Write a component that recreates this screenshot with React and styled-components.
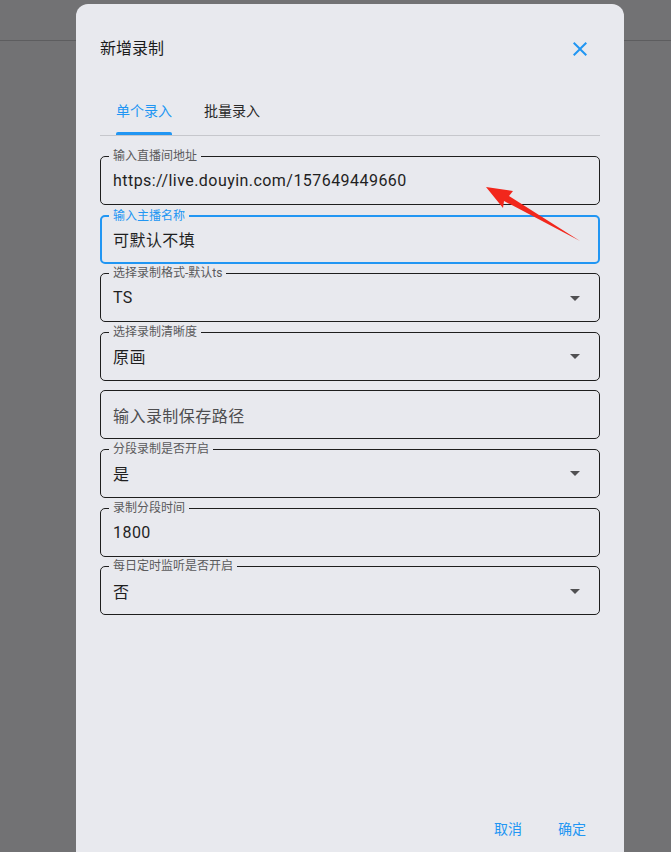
import styled, { createGlobalStyle } from "styled-components";

const GlobalStyle = createGlobalStyle`
  html, body {
    margin: 0;
    padding: 0;
    height: 100%;
    overflow: hidden;
  }
  body {
    font-family: Roboto, "Noto Sans CJK SC", sans-serif;
    background: #727274;
  }
`;

const Page = styled.div`
  position: relative;
  width: 100vw;
  height: 100vh;
  background: #727274;
`;

const AppBar = styled.div`
  height: 40px;
  border-bottom: 1px solid #5d5d5f;
`;

const Overlay = styled.div`
  position: absolute;
  inset: 0;
  display: flex;
  justify-content: flex-start;
  align-items: flex-start;
  padding: 4px 0 0 76px;
`;

const Dialog = styled.div`
  position: relative;
  width: 548px;
  height: 862px;
  background: #e8e9ee;
  border-radius: 12px;
  display: flex;
  flex-direction: column;
  box-sizing: border-box;
  padding-bottom: 20px;
`;

const Content = styled.div`
  flex: 1;
  padding: 33px 24px 0;
  display: flex;
  flex-direction: column;
`;

const TitleRow = styled.div`
  display: flex;
  align-items: center;
  justify-content: space-between;
  height: 24px;
`;

const Title = styled.h2`
  margin: 0;
  font-size: 16px;
  font-weight: 400;
  color: #1b1b1b;
  line-height: 24px;
`;

const CloseButton = styled.button`
  width: 40px;
  height: 40px;
  border: none;
  background: none;
  padding: 8px;
  display: flex;
  align-items: center;
  justify-content: center;
  color: #2196f3;
  cursor: pointer;
`;

const Tabs = styled.div`
  margin-top: 27px;
  display: flex;
  border-bottom: 1px solid #c6c7cc;
`;

const Tab = styled.button`
  position: relative;
  height: 47px;
  padding: 0 16px 4px;
  border: none;
  background: none;
  font-family: inherit;
  font-size: 14px;
  color: ${(p) => (p.$active ? "#2196f3" : "#2a2a2a")};
  cursor: pointer;

  &::after {
    content: "";
    display: ${(p) => (p.$active ? "block" : "none")};
    position: absolute;
    left: 16px;
    right: 16px;
    bottom: 0;
    height: 3px;
    border-radius: 2px 2px 0 0;
    background: #2196f3;
  }
`;

const Form = styled.div`
  margin-top: 20px;
  display: flex;
  flex-direction: column;
  gap: 9.6px;
`;

const Field = styled.div`
  position: relative;
  height: 49px;
  box-sizing: border-box;
  border: ${(p) => (p.$focused ? "2px solid #2196f3" : "1px solid #1e1e1e")};
  border-radius: 5px;
  display: flex;
  align-items: center;
  padding: 0 ${(p) => (p.$focused ? 11 : 12)}px;
`;

const Label = styled.span`
  position: absolute;
  top: -8px;
  left: ${(p) => (p.$focused ? 7 : 8)}px;
  padding: 0 4px;
  background: #e8e9ee;
  font-size: 12px;
  line-height: 14px;
  color: ${(p) => (p.$focused ? "#2196f3" : "#5a5a5c")};
`;

const Value = styled.span`
  flex: 1;
  font-size: 16px;
  color: ${(p) => (p.$placeholder ? "#4d4d4f" : "#1f1f1f")};
  letter-spacing: 0.45px;
`;

const Caret = styled.svg`
  width: 24px;
  height: 24px;
  fill: #505052;
`;

const Actions = styled.div`
  display: flex;
  justify-content: flex-end;
  padding-right: 20px;
`;

const TextButton = styled.button`
  width: 64px;
  height: 36px;
  border: none;
  background: none;
  font-family: inherit;
  font-size: 14px;
  color: #2196f3;
  cursor: pointer;
`;

const Annotation = styled.svg`
  position: absolute;
  left: 0;
  top: 0;
  pointer-events: none;
`;

const fields = [
  { label: "输入直播间地址", value: "https://live.douyin.com/157649449660" },
  { label: "输入主播名称", value: "可默认不填", focused: true },
  { label: "选择录制格式-默认ts", value: "TS", select: true },
  { label: "选择录制清晰度", value: "原画", select: true },
  { value: "输入录制保存路径", placeholder: true },
  { label: "分段录制是否开启", value: "是", select: true },
  { label: "录制分段时间", value: "1800" },
  { label: "每日定时监听是否开启", value: "否", select: true },
];

export default function App() {
  return (
    <>
      <GlobalStyle />
      <Page>
        <AppBar />
        <Overlay>
          <Dialog>
            <Content>
              <TitleRow>
                <Title>新增录制</Title>
                <CloseButton aria-label="close">
                  <svg width="24" height="24" viewBox="0 0 24 24" fill="currentColor">
                    <path d="M19 6.41 17.59 5 12 10.59 6.41 5 5 6.41 10.59 12 5 17.59 6.41 19 12 13.41 17.59 19 19 17.59 13.41 12z" />
                  </svg>
                </CloseButton>
              </TitleRow>
              <Tabs>
                <Tab $active>单个录入</Tab>
                <Tab>批量录入</Tab>
              </Tabs>
              <Form>
                {fields.map((f, i) => (
                  <Field key={i} $focused={f.focused}>
                    {f.label && <Label $focused={f.focused}>{f.label}</Label>}
                    <Value $placeholder={f.placeholder}>{f.value}</Value>
                    {f.select && (
                      <Caret viewBox="0 0 24 24">
                        <path d="M7 10l5 5 5-5z" />
                      </Caret>
                    )}
                  </Field>
                ))}
              </Form>
            </Content>
            <Actions>
              <TextButton>取消</TextButton>
              <TextButton>确定</TextButton>
            </Actions>
            <Annotation width="548" height="300" viewBox="76 4 548 300">
              <polygon
                points="486,187 513,191 509,196 580,241 504,201 503,208"
                fill="#f2271c"
              />
            </Annotation>
          </Dialog>
        </Overlay>
      </Page>
    </>
  );
}
